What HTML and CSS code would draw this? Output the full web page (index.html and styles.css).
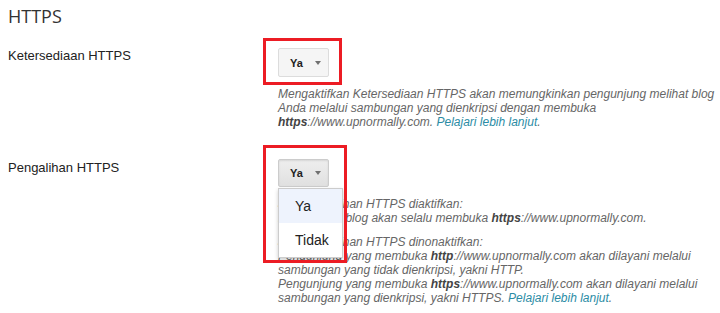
FILE: index.html
```html
<!DOCTYPE html>
<html lang="id">
<head>
<meta charset="utf-8">
<title>HTTPS</title>
<link rel="stylesheet" href="styles.css">
</head>
<body>
<div class="page">
  <h2 class="title">HTTPS</h2>

  <div class="row row-first">
    <div class="label">Ketersediaan HTTPS</div>
    <div class="control">
      <div class="picker">
        <div class="menu-button"><span class="caption">Ya</span><span class="arrow"></span></div>
        <div class="mark mark-one"></div>
      </div>
      <div class="desc">
        <p>Mengaktifkan Ketersediaan HTTPS akan memungkinkan pengunjung melihat blog<br>Anda melalui sambungan yang dienkripsi dengan membuka<br><b>https</b>://www.upnormally.com. <a class="link" href="#">Pelajari lebih lanjut</a>.</p>
      </div>
    </div>
  </div>

  <div class="row row-second">
    <div class="label label-second">Pengalihan HTTPS</div>
    <div class="control">
      <div class="picker">
        <div class="menu-button menu-button-open"><span class="caption">Ya</span><span class="arrow"></span></div>
        <ul class="menu">
          <li class="menu-item menu-item-active">Ya</li>
          <li class="menu-item">Tidak</li>
        </ul>
        <div class="mark mark-two"></div>
      </div>
      <div class="desc">
        <p>Jika Pengalihan HTTPS diaktifkan:<br>Pengunjung blog akan selalu membuka <b>https</b>://www.upnormally.com.</p>
        <p>Jika Pengalihan HTTPS dinonaktifkan:<br>Pengunjung yang membuka <b>http</b>://www.upnormally.com akan dilayani melalui<br>sambungan yang tidak dienkripsi, yakni HTTP.<br>Pengunjung yang membuka <b>https</b>://www.upnormally.com akan dilayani melalui<br>sambungan yang dienkripsi, yakni HTTPS. <a class="link" href="#">Pelajari lebih lanjut</a>.</p>
      </div>
    </div>
  </div>
</div>
</body>
</html>
```

FILE: styles.css
```css
html, body {
  margin: 0;
  padding: 0;
  background: #ffffff;
}

.page {
  padding: 4px 0 0 8px;
  font-family: "Liberation Sans", Arial, sans-serif;
  color: #222222;
}

.title {
  margin: 0;
  font-family: "Open Sans", "Liberation Sans", sans-serif;
  font-weight: 400;
  font-size: 18px;
  line-height: 24px;
  color: #333333;
}

.row {
  display: grid;
  grid-template-columns: 270px 1fr;
}

.row-first {
  margin-top: 20px;
}

.row-second {
  margin-top: 30px;
}

.label {
  font-size: 13px;
  line-height: 16px;
  color: #222222;
}

.label-second {
  padding-top: 1px;
}

.control {
  display: flex;
  flex-direction: column;
  align-items: flex-start;
}

.picker {
  position: relative;
}

.menu-button {
  box-sizing: border-box;
  width: 51px;
  height: 29px;
  display: flex;
  align-items: center;
  padding-left: 11px;
  background: #f5f5f5;
  border: 1px solid #dcdcdc;
  border-radius: 2px;
  font-size: 11px;
  font-weight: 700;
  color: #222222;
}

.menu-button-open {
  height: 28px;
  background: linear-gradient(#eeeeee, #e0e0e0);
  border-color: #cccccc;
  box-shadow: inset 0 1px 2px rgba(0, 0, 0, 0.1);
}

.arrow {
  margin-left: 12px;
  width: 0;
  height: 0;
  border-left: 3.5px solid transparent;
  border-right: 3.5px solid transparent;
  border-top: 4px solid #707070;
}

.menu {
  position: absolute;
  left: 0;
  top: 29px;
  z-index: 2;
  box-sizing: border-box;
  width: 65px;
  margin: 0;
  padding: 0;
  list-style: none;
  background: #ffffff;
  border: 1px solid #cccccc;
  box-shadow: 0 2px 4px rgba(0, 0, 0, 0.2);
}

.menu-item {
  height: 34px;
  line-height: 34px;
  padding-left: 16px;
  font-size: 14px;
  color: #222222;
}

.menu-item-active {
  background: #eef3fd;
}

.mark {
  position: absolute;
  z-index: 3;
  box-sizing: border-box;
  border: 3px solid #ec1c24;
  pointer-events: none;
}

.mark-one {
  left: -15px;
  top: -10px;
  width: 79px;
  height: 47px;
}

.mark-two {
  left: -15px;
  top: -14px;
  width: 84px;
  height: 118px;
}

.desc {
  margin-top: 10px;
  font-size: 12px;
  line-height: 14px;
  font-style: italic;
  color: #666666;
  white-space: nowrap;
}

.desc p {
  margin: 0;
}

.desc p + p {
  margin-top: 10px;
}

.desc b {
  color: #444444;
}

.link {
  color: #2b8ca5;
  text-decoration: none;
}
```
